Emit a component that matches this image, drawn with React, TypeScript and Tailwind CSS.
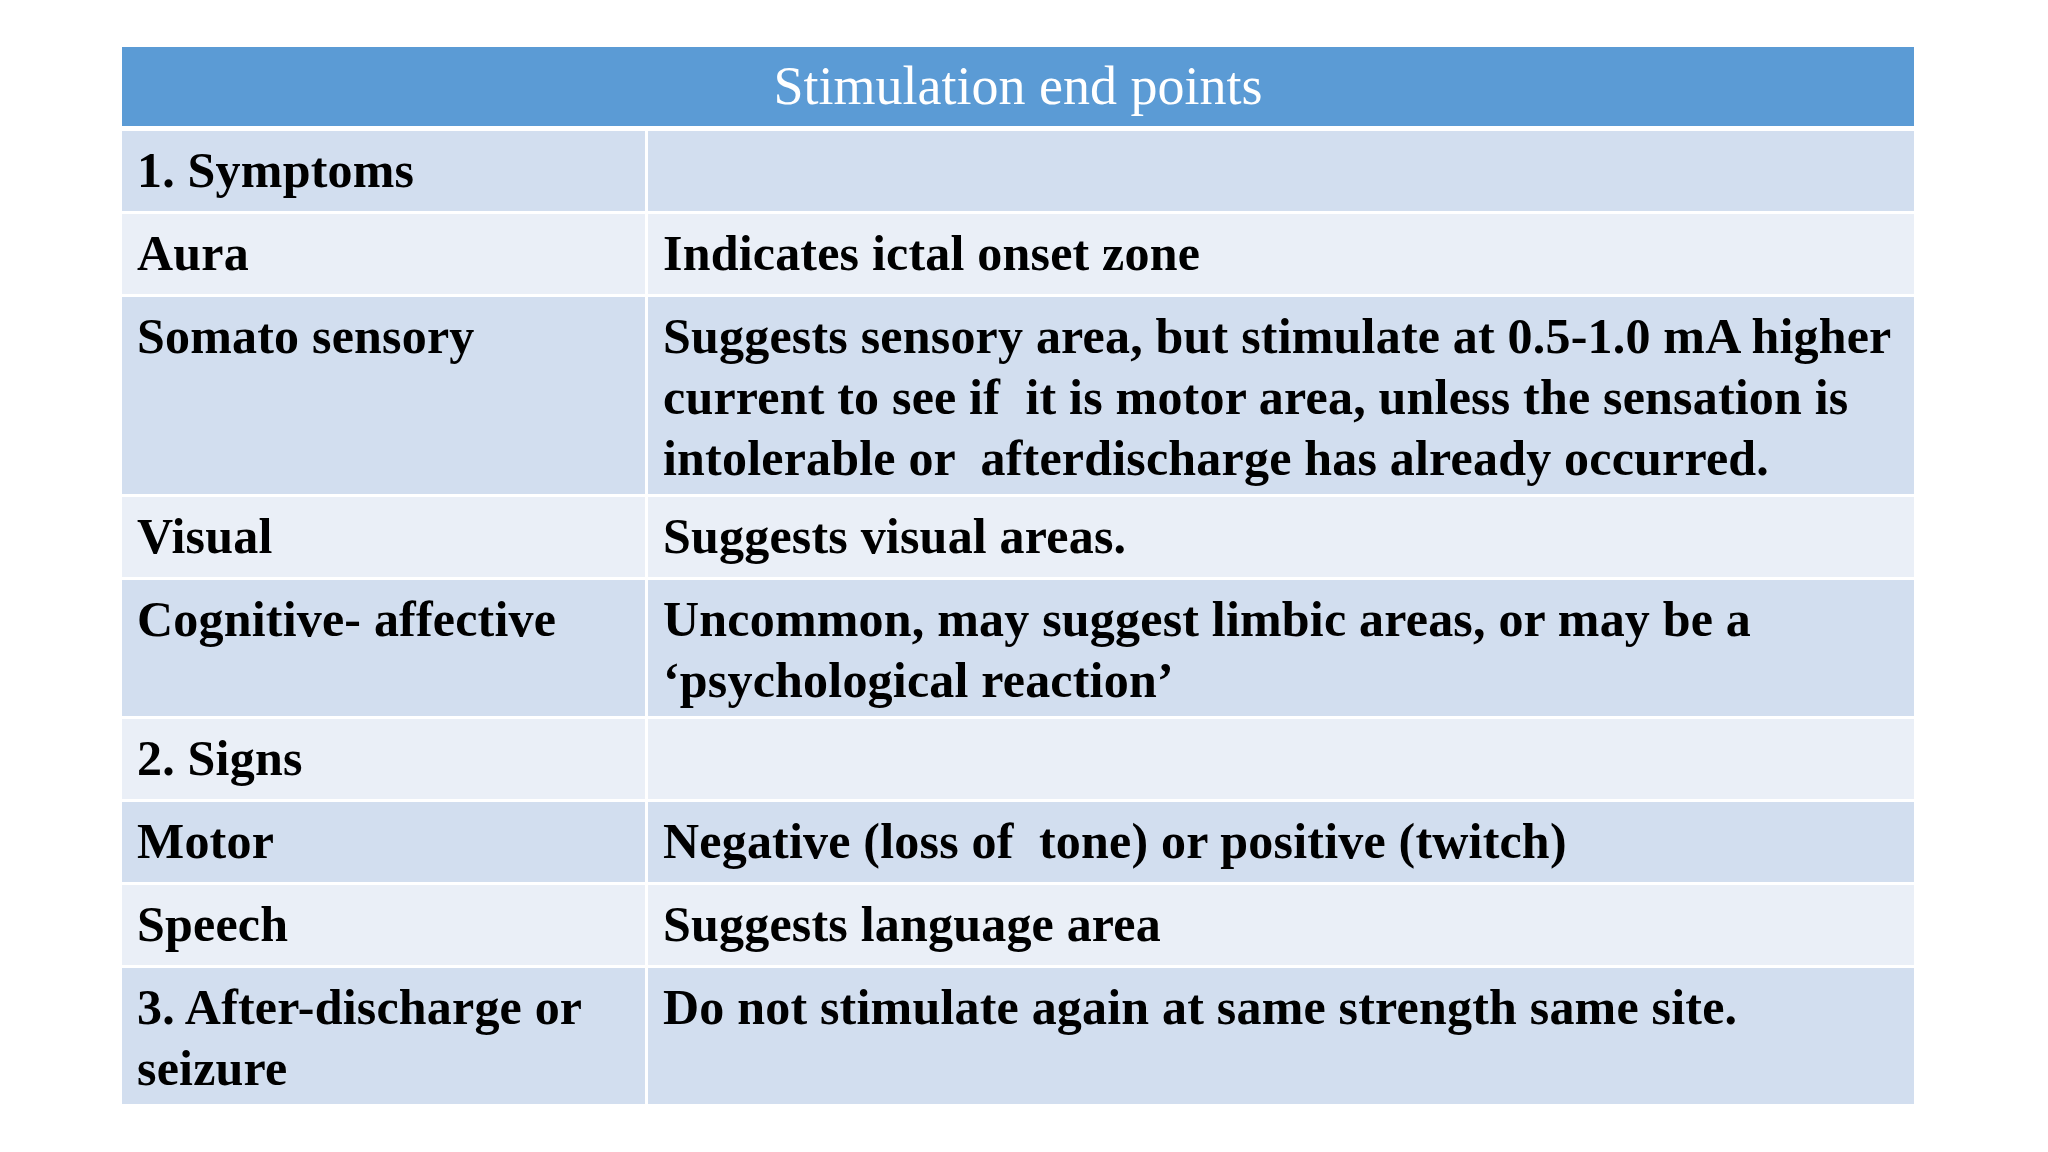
import React from "react";

type Row = {
  left: string[];
  right: string[];
  shade: "dark" | "light";
};

const rows: Row[] = [
  { left: ["1. Symptoms"], right: [], shade: "dark" },
  { left: ["Aura"], right: ["Indicates ictal onset zone"], shade: "light" },
  {
    left: ["Somato sensory"],
    right: [
      "Suggests sensory area, but stimulate at 0.5-1.0 mA higher",
      "current to see if  it is motor area, unless the sensation is",
      "intolerable or  afterdischarge has already occurred.",
    ],
    shade: "dark",
  },
  { left: ["Visual"], right: ["Suggests visual areas."], shade: "light" },
  {
    left: ["Cognitive- affective"],
    right: [
      "Uncommon, may suggest limbic areas, or may be a",
      "\u2018psychological reaction\u2019",
    ],
    shade: "dark",
  },
  { left: ["2. Signs"], right: [], shade: "light" },
  {
    left: ["Motor"],
    right: ["Negative (loss of  tone) or positive (twitch)"],
    shade: "dark",
  },
  { left: ["Speech"], right: ["Suggests language area"], shade: "light" },
  {
    left: ["3. After-discharge or", "seizure"],
    right: ["Do not stimulate again at same strength same site."],
    shade: "dark",
  },
];

function Cell({ lines, shade }: { lines: string[]; shade: "dark" | "light" }) {
  return (
    <div
      className={`min-h-[80px] pl-[15px] pr-[6px] pt-[9px] pb-[5px] ${
        shade === "dark" ? "bg-[#d2deef]" : "bg-[#eaeff7]"
      }`}
    >
      {lines.map((line, i) => (
        <div key={i} className="whitespace-pre leading-[61px]">
          {line}
        </div>
      ))}
    </div>
  );
}

export default function App() {
  return (
    <div className="w-[2048px] h-[1152px] bg-white pt-[47px] pl-[122px] font-['Liberation_Serif',serif] text-black">
      <div className="w-[1792px] flex flex-col">
        <div className="h-[79px] bg-[#5b9bd5] flex items-center justify-center text-white text-[54px]">
          Stimulation end points
        </div>
        <div className="mt-[5px] grid grid-cols-[523px_1fr] gap-[3px] text-[50px] font-bold tracking-[0.2px]">
          {rows.map((row, i) => (
            <React.Fragment key={i}>
              <Cell lines={row.left} shade={row.shade} />
              <Cell lines={row.right} shade={row.shade} />
            </React.Fragment>
          ))}
        </div>
      </div>
    </div>
  );
}
